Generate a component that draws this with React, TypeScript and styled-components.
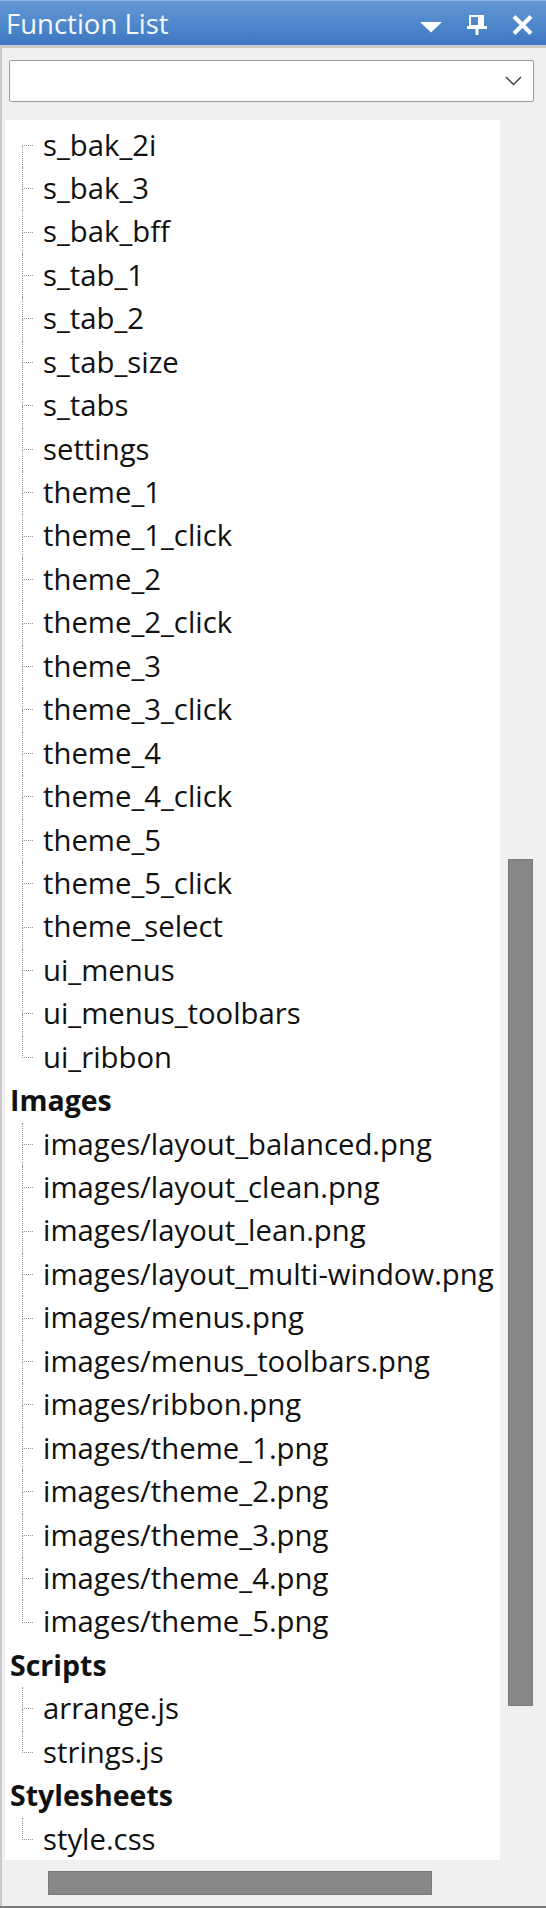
import React from "react";
import styled, { createGlobalStyle } from "styled-components";

const GlobalStyle = createGlobalStyle`
  html, body { margin: 0; padding: 0; background: #f0f0f0; }
  body { font-family: "Open Sans", "Noto Sans", sans-serif; }
`;

const Window = styled.div`
  width: 546px;
  height: 1908px;
  box-sizing: border-box;
  display: flex;
  flex-direction: column;
  background: #f0f0f0;
  border-bottom: 2px solid #7a7a7a;
  overflow: hidden;
`;

const TitleBar = styled.div`
  height: 48px;
  flex: none;
  box-sizing: border-box;
  display: flex;
  align-items: flex-start;
  padding-left: 6px;
  padding-right: 13px;
  background: linear-gradient(#6398d4, #3c78c1);
  border-top: 1px solid #8cb6e6;
  border-bottom: 3px solid #cbcbcb;
`;

const Title = styled.div`
  flex: 1;
  margin-top: 2px;
  font-size: 27.5px;
  line-height: 42px;
  color: #f4f8fd;
  white-space: nowrap;
`;

const TitleIcons = styled.div`
  display: flex;
  align-items: flex-start;
  margin-top: 14px;
  gap: 25px;
`;

const Body = styled.div`
  flex: 1;
  display: flex;
  flex-direction: column;
  border-left: 2px solid #cacaca;
  min-height: 0;
`;

const ComboBox = styled.div`
  flex: none;
  height: 42px;
  margin: 12px 12px 0 7px;
  box-sizing: border-box;
  background: #fff;
  border: 1.5px solid #9c9c9c;
  border-radius: 2px;
  display: flex;
  align-items: center;
  justify-content: flex-end;
  padding-right: 11px;
`;

const ListFrame = styled.div`
  flex: 1;
  min-height: 0;
  margin: 18px 5px 0 3px;
  display: grid;
  grid-template-columns: 1fr 41px;
  grid-template-rows: 1fr 46px;
`;

const Viewport = styled.div`
  background: #fff;
  overflow: hidden;
  min-width: 0;
  min-height: 0;
`;

const VTrack = styled.div`
  background: #f0f0f0;
  display: flex;
  flex-direction: column;
  padding-left: 8px;
`;

const HTrack = styled.div`
  background: #f0f0f0;
  display: flex;
  align-items: flex-start;
`;

const Corner = styled.div`
  background: #f0f0f0;
`;

const Thumb = styled.div<{ $w: number; $h: number; $top: number; $left: number }>`
  flex: none;
  box-sizing: border-box;
  width: ${(p) => p.$w}px;
  height: ${(p) => p.$h}px;
  margin-top: ${(p) => p.$top}px;
  margin-left: ${(p) => p.$left}px;
  background: #878787;
  border: 1px solid #7b7b7b;
`;

const Tree = styled.div`
  display: flex;
  flex-direction: column;
  padding-top: 3.5px;
  color: #111;
  font-size: 29.3px;
  white-space: nowrap;
`;

const HeaderRow = styled.div`
  height: 43.45px;
  line-height: 43.45px;
  padding-left: 5px;
  font-weight: 700;
  font-size: 28.5px;
`;

const ItemRow = styled.div`
  height: 43.45px;
  line-height: 43.45px;
  display: flex;
  padding-left: 17px;
`;

const Connector = styled.div`
  flex: none;
  width: 11px;
  margin-right: 10px;
  display: flex;
  flex-direction: column;
`;

const UpperHalf = styled.div<{ $line: boolean }>`
  flex: 1;
  border-left: 1px ${(p) => (p.$line ? "dotted" : "none")} #9a9a9a;
  border-bottom: 1px dotted #9a9a9a;
`;

const LowerHalf = styled.div<{ $line: boolean }>`
  flex: 1;
  border-left: 1px ${(p) => (p.$line ? "dotted" : "none")} #9a9a9a;
`;

const Label = styled.span``;

type Group = { title?: string; items: string[]; openTop?: boolean };

const groups: Group[] = [
  {
    openTop: true,
    items: [
      "s_bak_2i",
      "s_bak_3",
      "s_bak_bff",
      "s_tab_1",
      "s_tab_2",
      "s_tab_size",
      "s_tabs",
      "settings",
      "theme_1",
      "theme_1_click",
      "theme_2",
      "theme_2_click",
      "theme_3",
      "theme_3_click",
      "theme_4",
      "theme_4_click",
      "theme_5",
      "theme_5_click",
      "theme_select",
      "ui_menus",
      "ui_menus_toolbars",
      "ui_ribbon",
    ],
  },
  {
    title: "Images",
    items: [
      "images/layout_balanced.png",
      "images/layout_clean.png",
      "images/layout_lean.png",
      "images/layout_multi-window.png",
      "images/menus.png",
      "images/menus_toolbars.png",
      "images/ribbon.png",
      "images/theme_1.png",
      "images/theme_2.png",
      "images/theme_3.png",
      "images/theme_4.png",
      "images/theme_5.png",
    ],
  },
  { title: "Scripts", items: ["arrange.js", "strings.js"] },
  { title: "Stylesheets", items: ["style.css"] },
];

const DropIcon = () => (
  <svg width="22" height="20" viewBox="0 0 22 20">
    <polygon points="0,7 22,7 11,17.5" fill="#fff" />
  </svg>
);

const PinIcon = () => (
  <svg width="20" height="20" viewBox="0 0 20 20">
    <rect x="3" y="1" width="13" height="10" fill="none" stroke="#fff" strokeWidth="2" />
    <rect x="11" y="1" width="5" height="10" fill="#fff" />
    <rect x="0" y="11" width="20" height="3" fill="#fff" />
    <rect x="8.5" y="14" width="3" height="6" fill="#fff" />
  </svg>
);

const CloseIcon = () => (
  <svg width="21" height="20" viewBox="0 0 21 20">
    <path d="M2 1.5 L19 18.5 M19 1.5 L2 18.5" stroke="#fff" strokeWidth="4" strokeLinecap="butt" />
  </svg>
);

const Chevron = () => (
  <svg width="17" height="10" viewBox="0 0 17 10">
    <path d="M1 1 L8.5 8.5 L16 1" fill="none" stroke="#3a3a3a" strokeWidth="1.4" />
  </svg>
);

export default function App() {
  return (
    <>
      <GlobalStyle />
      <Window>
        <TitleBar>
          <Title>Function List</Title>
          <TitleIcons>
            <DropIcon />
            <PinIcon />
            <CloseIcon />
          </TitleIcons>
        </TitleBar>
        <Body>
          <ComboBox>
            <Chevron />
          </ComboBox>
          <ListFrame>
            <Viewport>
              <Tree>
                {groups.map((g, gi) => (
                  <React.Fragment key={gi}>
                    {g.title && <HeaderRow>{g.title}</HeaderRow>}
                    {g.items.map((it, i) => {
                      const last = i === g.items.length - 1;
                      const upper = !(g.openTop && i === 0);
                      return (
                        <ItemRow key={it}>
                          <Connector>
                            <UpperHalf $line={upper} />
                            <LowerHalf $line={!last} />
                          </Connector>
                          <Label>{it}</Label>
                        </ItemRow>
                      );
                    })}
                  </React.Fragment>
                ))}
              </Tree>
            </Viewport>
            <VTrack>
              <Thumb $w={25} $h={847} $top={739} $left={0} />
            </VTrack>
            <HTrack>
              <Thumb $w={384} $h={24} $top={11} $left={43} />
            </HTrack>
            <Corner />
          </ListFrame>
        </Body>
      </Window>
    </>
  );
}
